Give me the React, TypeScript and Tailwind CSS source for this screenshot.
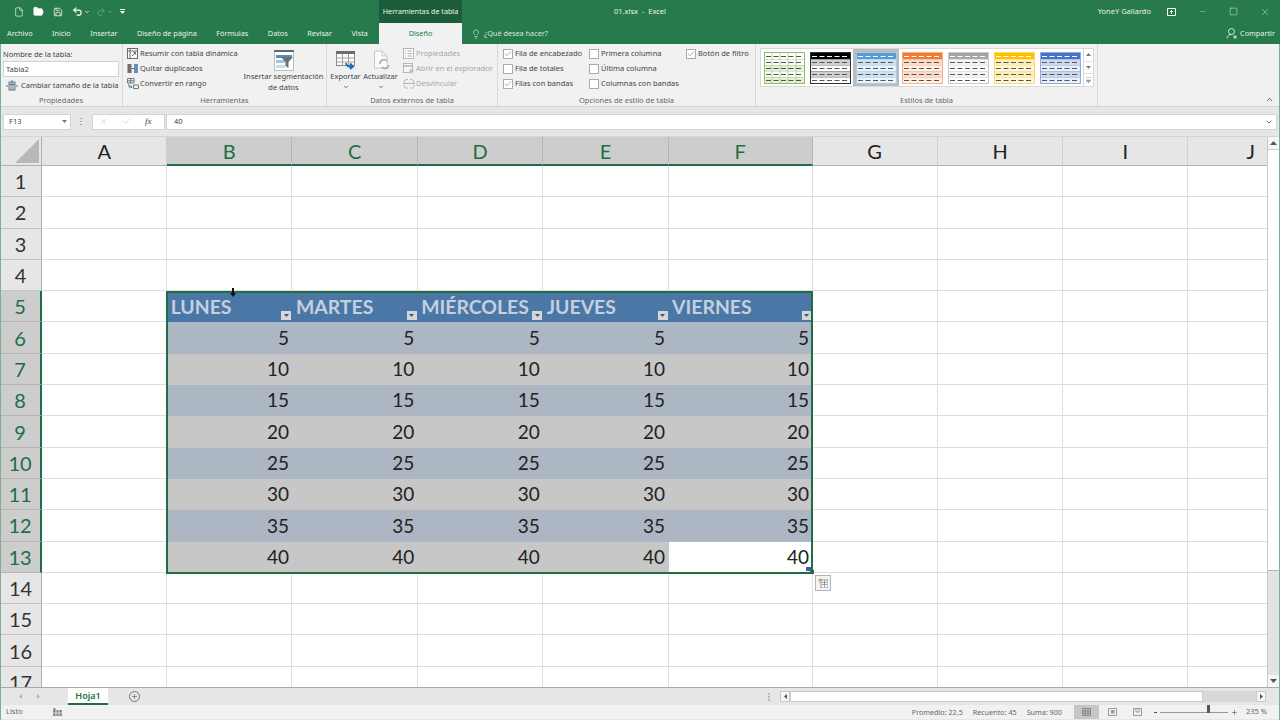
import { Check, ChevronDown, ChevronUp, File, FolderOpen, Lightbulb, Minus, Plus, Redo2, Save, Square, Undo2, X } from "lucide-react"

const ui = "font-['Noto_Sans',sans-serif]"
const sheet = "font-['Lato',sans-serif]"

const tabs = ["Archivo", "Inicio", "Insertar", "Diseño de página", "Fórmulas", "Datos", "Revisar", "Vista"]
const columns = ["A", "B", "C", "D", "E", "F", "G", "H", "I", "J"]
const heads = ["LUNES", "MARTES", "MIÉRCOLES", "JUEVES", "VIERNES"]
const rows = [1, 2, 3, 4, 5, 6, 7, 8, 9, 10, 11, 12, 13, 14, 15, 16, 17]

const styles = [
  { head: "#ffffff", band: "#ffffff", alt: "#e4f0da", edge: "#8cc063", grid: "#a9d08e", selected: false },
  { head: "#000000", band: "#cfcfcf", alt: "#ffffff", edge: "#333333", grid: "#777777", selected: false },
  { head: "#5b9bd5", band: "#cfe2f3", alt: "#eaf2fa", edge: "#a9cbe9", grid: "#a9cbe9", selected: true },
  { head: "#ed7d31", band: "#fadcc8", alt: "#fdf1e9", edge: "#f4b183", grid: "#f4b183", selected: false },
  { head: "#a5a5a5", band: "#f3f3f3", alt: "#ffffff", edge: "#c9c9c9", grid: "#d0d0d0", selected: false },
  { head: "#ffc000", band: "#ffedb8", alt: "#fff8e1", edge: "#ffd966", grid: "#ffd966", selected: false },
  { head: "#4472c4", band: "#ccd9ef", alt: "#e9eef8", edge: "#8faadc", grid: "#8faadc", selected: false },
]

function StyleThumb({ s, cols }: { s: (typeof styles)[number]; cols?: boolean }) {
  const ys = [2, 8, 14, 20, 26]
  return (
    <div className={`flex h-[37px] w-[46px] items-center justify-center ${s.selected ? "bg-[#bcbcbc]" : ""}`}>
      <svg width="41" height="32" viewBox="0 0 41 32">
        <rect x="0.5" y="0.5" width="40" height="31" fill={s.alt} stroke={s.edge} />
        {ys.map((y, i) => (
          <rect key={y} x="1" y={y - 1} width="39" height="6" fill={i === 0 ? s.head : i % 2 ? s.band : s.alt} />
        ))}
        {cols &&
          [8, 16, 24, 32].map((x) => <line key={x} x1={x} y1="1" x2={x} y2="31" stroke={s.grid} strokeWidth="0.8" />)}
        {[7.5, 13.5, 19.5, 25.5].map((y) => (
          <line key={y} x1="1" y1={y} x2="40" y2={y} stroke={s.grid} strokeWidth="0.5" />
        ))}
        {ys.map((y, i) => (
          <line
            key={y}
            x1="2"
            x2="39"
            y1={y + 2.5}
            y2={y + 2.5}
            stroke={i === 0 && !cols ? "#ffffff" : "#555555"}
            strokeWidth="1"
            strokeDasharray="5 2.5"
          />
        ))}
      </svg>
    </div>
  )
}

function Tick({ on, label, className }: { on?: boolean; label: string; className?: string }) {
  return (
    <div className={`flex h-[15px] items-center gap-[2px] ${className ?? ""}`}>
      <span className="flex h-[10px] w-[10px] items-center justify-center border border-[#ababab] bg-white">
        {on && <Check size={8} strokeWidth={1.5} className="text-[#555]" />}
      </span>
      <span className="whitespace-nowrap">{label}</span>
    </div>
  )
}

function MiniIcon({ kind, faded }: { kind: string; faded?: boolean }) {
  const c = faded ? "#b5b5b5" : "#5c7a8c"
  return (
    <svg width="12" height="11" viewBox="0 0 12 11" fill="none" className="shrink-0">
      {kind === "pivot" && (
        <>
          <rect x="0.5" y="0.5" width="10" height="10" fill="#fff" stroke="#6a6a6a" />
          <path d="M3 0.5V10.5M0.5 3H10.5" stroke="#6a6a6a" />
          <path d="M5 8L8.5 4.5M6.5 4.5H8.5V6.5" stroke="#2a7ab8" />
        </>
      )}
      {kind === "dupes" && (
        <>
          <rect x="0.5" y="1" width="4" height="9" fill="#6f6f6f" />
          <rect x="7" y="1" width="4" height="9" fill="#5d8fbf" />
          <path d="M4.5 5.5H7" stroke="#c04a2a" />
        </>
      )}
      {kind === "range" && (
        <>
          <path d="M0.5 0.5H7V5H0.5ZM0.5 2.8H7M3.5 0.5V5" stroke="#777" />
          <path d="M2 6V9H5M5 9L3.8 8M5 9L3.8 10" stroke="#2a7ab8" />
          <path d="M6.5 7H11.5V10.5H6.5Z" stroke="#777" />
        </>
      )}
      {kind === "resize" && (
        <>
          <rect x="3" y="2" width="6" height="8" stroke={c} />
          <path d="M5 2V10M7 2V10M3 4.5H9M0 6H2M10 6H12M6 0V2" stroke={c} />
        </>
      )}
      {kind === "props" && (
        <>
          <rect x="0.5" y="0.5" width="10" height="10" fill="#fff" stroke="#b5b5b5" />
          <path d="M2 3H3M2 5.5H3M2 8H3M4.5 3H9M4.5 5.5H9M4.5 8H9" stroke="#a8a8a8" />
        </>
      )}
      {kind === "open" && (
        <>
          <rect x="0.5" y="0.5" width="9" height="9" fill="#f6f6f6" stroke="#b5b5b5" />
          <path d="M0.5 3H9.5" stroke="#a8b6c2" strokeWidth="1.5" />
          <circle cx="8.5" cy="8" r="2.3" fill="#c5c5c5" />
        </>
      )}
      {kind === "unlink" && <path d="M1 5C1 2 3 1 5 1.5M11 5C11 2 9 1 7 1.5M1 7C1 10 3 10.5 5 10M11 7C11 10 9 10.5 7 10M0 5.5H12" stroke="#b5b5b5" />}
    </svg>
  )
}

function RibbonLabel({ children }: { children: string }) {
  return <div className="mt-auto mb-[0.5px] shrink-0 text-center leading-[11px] text-[#666]">{children}</div>
}

function Ribbon() {
  return (
    <div className={`${ui} relative flex h-[62px] bg-[#f1f1f1] text-[7.5px] leading-[15px] text-[#444]`}>
      <div className="flex w-[123px] flex-col border-r border-[#d8d8d8] px-[3px] pt-[3px]">
        <div className="h-[13px]">Nombre de la tabla:</div>
        <div className="mt-[1px] flex h-[16px] w-[116px] items-center border border-[#d2d2d2] bg-white pl-[2px]">Tabla2</div>
        <div className="flex h-[16px] items-center gap-[3px] pl-[3px]">
          <MiniIcon kind="resize" />
          <span className="whitespace-nowrap">Cambiar tamaño de la tabla</span>
        </div>
        <RibbonLabel>Propiedades</RibbonLabel>
      </div>

      <div className="flex w-[204px] flex-col border-r border-[#d8d8d8] pt-[2px]">
        <div className="flex min-h-0 flex-1">
          <div className="flex w-[118px] flex-col pl-[4px]">
            <div className="flex h-[15px] items-center gap-[1px]"><MiniIcon kind="pivot" /><span className="whitespace-nowrap">Resumir con tabla dinámica</span></div>
            <div className="flex h-[15px] items-center gap-[1px]"><MiniIcon kind="dupes" /><span className="whitespace-nowrap">Quitar duplicados</span></div>
            <div className="flex h-[15px] items-center gap-[1px]"><MiniIcon kind="range" /><span className="whitespace-nowrap">Convertir en rango</span></div>
          </div>
          <div className="flex w-[85px] flex-col items-center pt-[4px]">
            <svg width="20" height="21" viewBox="0 0 20 21">
              <rect x="0.5" y="0.5" width="19" height="20" fill="#fff" stroke="#bcbcbc" />
              <rect x="0" y="0" width="20" height="2" fill="#666" />
              <rect x="2" y="5" width="16" height="3" fill="#4f8fc0" />
              <rect x="2" y="10" width="9" height="3" fill="#9ec4df" />
              <rect x="2" y="15" width="9" height="3" fill="#c8dcec" />
              <path d="M7 7H19L14.5 12V18L11.5 16V12Z" fill="#6f6f6f" />
            </svg>
            <div className="whitespace-nowrap text-center leading-[11px]">Insertar segmentación<br />de datos</div>
          </div>
        </div>
        <RibbonLabel>Herramientas</RibbonLabel>
      </div>

      <div className="flex w-[171px] flex-col border-r border-[#d8d8d8] pt-[2px]">
        <div className="flex min-h-0 flex-1">
          <div className="flex w-[36px] flex-col items-center pl-[1px] pt-[4px]">
            <svg width="20" height="20" viewBox="0 0 20 20">
              <rect x="0.5" y="1.5" width="18" height="14" fill="#fff" stroke="#8a8a8a" />
              <rect x="0" y="1" width="19" height="3" fill="#6d6d6d" />
              <path d="M6.5 4V15.5M12.5 4V15.5M0.5 8H18.5M0.5 12H18.5" stroke="#a0a0a0" />
              <path d="M10 13C10 16 13 17 16 16.5M14 13.5L17 16.5L14 19" fill="none" stroke="#1f6fb4" strokeWidth="2" />
            </svg>
            <div className="mt-[1px] leading-[11px]">Exportar</div>
            <ChevronDown size={6} strokeWidth={3} className="mt-[2px]" />
          </div>
          <div className="flex w-[35px] flex-col items-center pt-[4px]">
            <svg width="20" height="20" viewBox="0 0 20 20">
              <path d="M3.5 1H11L16 6V18H3.5Z" fill="#fbfbfb" stroke="#c8c8c8" />
              <path d="M11 1V6H16" fill="none" stroke="#c8c8c8" />
              <path d="M9 14A4 4 0 0 1 16 11M18 15A4 4 0 0 1 11 17" fill="none" stroke="#a8a8a8" strokeWidth="1.6" />
            </svg>
            <div className="mt-[1px] leading-[11px]">Actualizar</div>
            <ChevronDown size={6} strokeWidth={3} className="mt-[2px]" />
          </div>
          <div className="flex flex-col pl-[5px] text-[#a6a6a6]">
            <div className="flex h-[15px] items-center gap-[1px]"><MiniIcon kind="props" faded /><span className="whitespace-nowrap">Propiedades</span></div>
            <div className="flex h-[15px] items-center gap-[1px]"><MiniIcon kind="open" faded /><span className="whitespace-nowrap">Abrir en el explorador</span></div>
            <div className="flex h-[15px] items-center gap-[1px]"><MiniIcon kind="unlink" faded /><span className="whitespace-nowrap">Desvincular</span></div>
          </div>
        </div>
        <RibbonLabel>Datos externos de tabla</RibbonLabel>
      </div>

      <div className="flex w-[258px] flex-col border-r border-[#d8d8d8] pt-[2px]">
        <div className="flex min-h-0 flex-1 pl-[5px]">
          <div className="flex w-[86px] flex-col">
            <Tick on label="Fila de encabezado" />
            <Tick label="Fila de totales" />
            <Tick on label="Filas con bandas" />
          </div>
          <div className="flex w-[97px] flex-col">
            <Tick label="Primera columna" />
            <Tick label="Última columna" />
            <Tick label="Columnas con bandas" />
          </div>
          <div className="flex flex-col">
            <Tick on label="Botón de filtro" />
          </div>
        </div>
        <RibbonLabel>Opciones de estilo de tabla</RibbonLabel>
      </div>

      <div className="flex w-[342px] flex-col border-r border-[#d8d8d8] pt-[4px]">
        <div className="ml-[4px] flex h-[39px] w-[334px] border border-[#d8d8d8] bg-white">
          {styles.map((s, i) => (
            <StyleThumb key={s.head + i} s={s} cols={i === 0} />
          ))}
          <div className="ml-auto flex w-[10px] flex-col border-l border-[#d8d8d8] text-[#777]">
            <div className="flex flex-1 items-center justify-center border-b border-[#e2e2e2]"><svg width="5" height="3"><path d="M2.5 0L5 3H0Z" fill="#777" /></svg></div>
            <div className="flex flex-1 items-center justify-center border-b border-[#e2e2e2]"><svg width="5" height="3"><path d="M2.5 3L5 0H0Z" fill="#777" /></svg></div>
            <div className="flex flex-1 items-center justify-center"><svg width="5" height="6"><path d="M0 0.5H5M2.5 6L5 3H0Z" stroke="#999" strokeWidth="0.5" fill="#999" /></svg></div>
          </div>
        </div>
        <RibbonLabel>Estilos de tabla</RibbonLabel>
      </div>
      <ChevronUp size={9} strokeWidth={2.5} className="absolute bottom-[2px] right-[6px] text-[#555]" />
    </div>
  )
}

function FormulaBar() {
  return (
    <div className={`${ui} flex h-[30px] items-center border-t border-[#d4d4d4] bg-[#e6e6e6] px-[3px] text-[7.5px] text-[#444]`}>
      <div className="flex h-[16px] w-[68px] items-center justify-between border border-[#d4d4d4] bg-white pl-[5px] pr-[3px]">
        <span>F13</span>
        <svg width="5" height="3"><path d="M0 0H5L2.5 3Z" fill="#777" /></svg>
      </div>
      <div className="mx-[9px] flex w-[3px] flex-col gap-[2px]">
        <span className="h-[1px] w-[2px] bg-[#aaa]" />
        <span className="h-[1px] w-[2px] bg-[#aaa]" />
        <span className="h-[1px] w-[2px] bg-[#aaa]" />
      </div>
      <div className="flex h-[16px] w-[73px] items-center gap-[14px] border border-[#d4d4d4] bg-white pl-[6px]">
        <X size={9} className="text-[#aaa]" strokeWidth={1.2} />
        <Check size={9} className="text-[#aaa]" strokeWidth={1.2} />
        <span className="font-['Liberation_Serif',serif] text-[9px] italic text-[#444]">fx</span>
      </div>
      <div className="ml-[1px] flex h-[16px] flex-1 items-center justify-between border border-[#d4d4d4] bg-white pl-[7px] pr-[3px]">
        <span>40</span>
        <ChevronDown size={8} strokeWidth={2.5} className="text-[#555]" />
      </div>
    </div>
  )
}

function Cell({ col, row }: { col: number; row: number }) {
  const inTable = col >= 1 && col <= 5 && row >= 5 && row <= 13
  if (!inTable) {
    return <div className="border-b border-r border-[#dedede] bg-white" />
  }
  if (row === 5) {
    return (
      <div className="relative flex items-center overflow-hidden bg-[#4a77a6] pl-[3.5px] text-[19.4px] font-bold text-[#c5d0de]">
        <span className="whitespace-nowrap">{heads[col - 1]}</span>
        <span className="absolute bottom-[2px] right-[1px] flex h-[9px] w-[10px] items-center justify-center bg-[#d3d6da]">
          <svg width="5" height="3"><path d="M0 0H5L2.5 3Z" fill="#555" /></svg>
        </span>
      </div>
    )
  }
  const active = row === 13 && col === 5
  const band = row % 2 === 0 ? "bg-[#adb6c3]" : "bg-[#c7c7c7]"
  return (
    <div className={`flex items-center justify-end pr-[3.5px] text-[19px] text-[#222] ${active ? "bg-white" : band}`}>
      {(row - 5) * 5}
    </div>
  )
}

function Grid() {
  return (
    <div className={`${sheet} relative grid min-w-0 flex-1 grid-cols-[42.2px_125px_125.3px_125.3px_125.5px_125.3px_144px_125.2px_125.5px_125.2px_125.3px] grid-rows-[29px] auto-rows-[31.3px] overflow-hidden`}>
      <div className="flex items-end justify-end border-b border-r border-[#b0b0b0] bg-[#e6e6e6] pb-[2px] pr-[2px]">
        <svg width="24" height="24"><path d="M24 0V24H0Z" fill="#b8b8b8" /></svg>
      </div>
      {columns.map((c, i) => {
        const sel = i >= 1 && i <= 5
        return (
          <div
            key={c}
            className={`flex items-center justify-center border-r text-[20px] ${
              sel ? "border-b-2 border-r-[#b5b5b5] border-b-[#1e6e42] bg-[#cdcdcd] text-[#1e6e42]" : "border-b border-r-[#cfcfcf] border-b-[#b0b0b0] bg-[#e6e6e6] text-[#222]"
            }`}
          >
            {c}
          </div>
        )
      })}
      {rows.map((r) => {
        const sel = r >= 5 && r <= 13
        return [
          <div
            key={`h${r}`}
            className={`flex items-center justify-center border-b text-[20px] ${
              sel ? "border-r-2 border-r-[#1e6e42] border-b-[#b5b5b5] bg-[#cdcdcd] text-[#1e6e42]" : "border-r border-r-[#b0b0b0] border-b-[#c4c4c4] bg-[#e6e6e6] text-[#333]"
            }`}
          >
            {r}
          </div>,
          ...columns.map((_, i) => <Cell key={`${r}-${i}`} col={i} row={r} />),
        ]
      })}

      {/* selection, fill handle, paste options */}
      <div className="pointer-events-none absolute left-[166px] top-[154px] h-[283px] w-[647px] border-2 border-[#1e6e42]" />
      <div className="absolute left-[806px] top-[430px] h-[4px] w-[5px] bg-[#4a55a8]" />
      <div className="absolute left-[810px] top-[433px] h-[4px] w-[4px] bg-[#1e6e42]" />
      <div className="absolute left-[815px] top-[438px] flex h-[16px] w-[16px] items-center justify-center border border-[#b5b5b5] bg-[#f4f4f4]">
        <svg width="10" height="10" viewBox="0 0 10 10">
          <rect x="3" y="2" width="7" height="8" fill="#fff" stroke="#777" strokeWidth="0.8" />
          <path d="M4 4.5H9M4 6.5H9M6.5 2.5V9.5" stroke="#6a7f95" strokeWidth="0.7" />
          <path d="M0 1L4 0.5L2 5Z" fill="#d9a25f" />
        </svg>
      </div>
      <svg width="6" height="9" viewBox="0 0 6 9" className="absolute left-[230px] top-[151px]">
        <path d="M2 0H4V5H6L3 9L0 5H2Z" fill="#111" />
      </svg>
    </div>
  )
}

function VScroll() {
  return (
    <div className="flex w-[13px] shrink-0 flex-col border-l border-[#c9c9c9] bg-[#e3e3e3] pr-[1px]">
      <div className="flex h-[13px] items-center justify-center border-b border-[#cfcfcf] bg-[#f5f5f5]"><svg width="7" height="4"><path d="M3.5 0L7 4H0Z" fill="#555" /></svg></div>
      <div className="h-[421px] border-b border-[#b5b5b5] bg-white" />
      <div className="flex-1" />
      <div className="flex h-[12px] items-center justify-center bg-[#f5f5f5]"><svg width="7" height="4"><path d="M3.5 4L7 0H0Z" fill="#555" /></svg></div>
    </div>
  )
}

function SheetTabs() {
  return (
    <div className={`${ui} flex h-[18px] items-center border-t border-[#a9a9a9] bg-[#e6e6e6] text-[9px]`}>
      <div className="flex w-[68px] items-center gap-[15px] pl-[19px] text-[#aaa]">
        <svg width="3" height="5"><path d="M3 0V5L0 2.5Z" fill="#b5b5b5" /></svg>
        <svg width="3" height="5"><path d="M0 0V5L3 2.5Z" fill="#b5b5b5" /></svg>
      </div>
      <div className="flex h-[17px] w-[40px] items-center justify-center border-b-2 border-[#1e6e42] bg-white font-semibold text-[#1e6e42]">Hoja1</div>
      <div className="ml-[21px] flex h-[11px] w-[11px] items-center justify-center rounded-full border border-[#777]">
        <Plus size={7} strokeWidth={2} className="text-[#555]" />
      </div>
      <div className="ml-[628px] flex w-[6px] flex-col gap-[1px]">
        <span className="h-[2px] w-[2px] bg-[#bbb]" />
        <span className="h-[2px] w-[2px] bg-[#bbb]" />
        <span className="h-[2px] w-[2px] bg-[#bbb]" />
      </div>
      <div className="ml-[6px] flex h-[11px] w-[10px] items-center justify-center border border-[#c9c9c9] bg-[#f5f5f5]"><svg width="3" height="5"><path d="M3 0V5L0 2.5Z" fill="#555" /></svg></div>
      <div className="h-[11px] w-[413px] border border-[#c9c9c9] bg-white" />
      <div className="h-[11px] w-[53px] bg-[#d8d8d8]" />
      <div className="flex h-[11px] w-[10px] items-center justify-center border border-[#c9c9c9] bg-[#f5f5f5]"><svg width="3" height="5"><path d="M0 0V5L3 2.5Z" fill="#555" /></svg></div>
    </div>
  )
}

function StatusBar() {
  return (
    <div className={`${ui} flex h-[14px] items-center bg-[#f1f1f1] pl-[6px] pr-[13px] text-[7.5px] text-[#666]`}>
      <span>Listo</span>
      <svg width="9" height="8" viewBox="0 0 9 8" className="ml-[30px]">
        <rect x="0" y="2" width="9" height="6" fill="#8a8a8a" />
        <path d="M3 2V8M6 2V8M0 5H9" stroke="#f1f1f1" strokeWidth="0.7" />
        <circle cx="1.5" cy="1" r="1" fill="#666" />
      </svg>
      <div className="ml-auto flex gap-[10px] whitespace-nowrap text-[7.2px]">
        <span>Promedio: 22,5</span>
        <span>Recuento: 45</span>
        <span>Suma: 900</span>
      </div>
      <div className="ml-[12px] flex h-[14px] w-[25px] shrink-0 items-center justify-center bg-[#c6c6c6]">
        <svg width="9" height="8" viewBox="0 0 9 8"><path d="M0.5 0.5H8.5V7.5H0.5ZM0.5 3H8.5M0.5 5.2H8.5M3 0.5V7.5M6 0.5V7.5" fill="none" stroke="#666" strokeWidth="0.6" /></svg>
      </div>
      <div className="ml-[9px] flex shrink-0 gap-[16px]">
        <svg width="9" height="8" viewBox="0 0 9 8"><path d="M0.5 0.5H8.5V7.5H0.5Z" fill="none" stroke="#777" strokeWidth="0.7" /><rect x="3" y="2" width="3.5" height="3.5" fill="#999" /></svg>
        <svg width="9" height="8" viewBox="0 0 9 8"><path d="M0.5 0.5H8.5V7.5H0.5ZM3 0.5V4H6V0.5" fill="none" stroke="#777" strokeWidth="0.7" /></svg>
      </div>
      <div className="relative ml-[12px] flex w-[85px] shrink-0 items-center">
        <span className="h-[1px] w-[3px] bg-[#555]" />
        <span className="ml-[3px] h-[1px] w-[68px] bg-[#999]" />
        <Plus size={7} strokeWidth={2} className="ml-[3px] text-[#555]" />
        <span className="absolute left-[53px] top-[-4px] h-[8px] w-[3px] bg-[#555]" />
      </div>
      <span className="ml-[7px] whitespace-nowrap">235 %</span>
    </div>
  )
}

export default function App() {
  return (
    <div className="relative flex h-[720px] w-[1280px] flex-col overflow-hidden bg-[#e6e6e6]">
      {/* title bar */}
      <div className={`${ui} flex h-[23px] items-center bg-[#267a4c] text-[7.5px] text-[#edf4ef]`}>
        <div className="flex w-[379px] items-center pl-[14px]">
          <File size={10} strokeWidth={1.5} className="text-white" />
          <FolderOpen size={11} strokeWidth={1.8} className="ml-[9px] text-white" fill="#ffffff" />
          <Save size={10} strokeWidth={1.8} className="ml-[9px] text-white" />
          <Undo2 size={11} strokeWidth={2.4} className="ml-[9px] text-white" />
          <ChevronDown size={6} strokeWidth={3} className="ml-[1px] text-white" />
          <Redo2 size={10} strokeWidth={2} className="ml-[6px] text-[#6aa585]" />
          <ChevronDown size={6} strokeWidth={3} className="ml-[1px] text-[#6aa585]" />
          <svg width="5" height="5" viewBox="0 0 5 5" className="ml-[7px]">
            <path d="M0 0.5H5" stroke="#fff" />
            <path d="M0 2H5L2.5 5Z" fill="#fff" />
          </svg>
        </div>
        <div className="flex h-[23px] w-[83px] items-center justify-center whitespace-nowrap bg-[#1c5c39] text-[7.2px]">Herramientas de tabla</div>
        <span className="ml-[152px] whitespace-pre">01.xlsx  -  Excel</span>
        <div className="ml-auto flex items-center">
          <span className="mr-[5px] whitespace-nowrap">YoneY Gallardo</span>
          <div className="flex w-[31px] justify-center">
            <svg width="9" height="8" viewBox="0 0 9 8">
              <path d="M0.5 0.5H8.5V7.5H0.5Z" fill="none" stroke="#fff" />
              <path d="M4.5 6V2.5M3 4L4.5 2.5L6 4" fill="none" stroke="#fff" />
            </svg>
          </div>
          <div className="flex w-[31px] justify-center"><Minus size={9} strokeWidth={1} className="text-[#cfe2d7]" /></div>
          <div className="flex w-[31px] justify-center"><Square size={9} strokeWidth={1.2} className="text-white" /></div>
          <div className="flex w-[31px] justify-center"><X size={10} strokeWidth={1} className="text-white" /></div>
        </div>
      </div>

      {/* tabs */}
      <div className={`${ui} flex h-[21px] items-center bg-[#267a4c] text-[7.3px] text-[#e9f2ec]`}>
        <div className="flex w-[379px] gap-[19.5px] pl-[7px]">
          {tabs.map((t) => (
            <span key={t} className="whitespace-nowrap">{t}</span>
          ))}
        </div>
        <div className="flex h-[21px] w-[83px] items-center justify-center bg-[#f1f1f1] text-[#267a4c]">Diseño</div>
        <Lightbulb size={10} strokeWidth={1.3} className="ml-[9px] text-white" />
        <span className="ml-[3px] whitespace-nowrap text-[#d7e7dd]">¿Qué desea hacer?</span>
        <div className="ml-auto flex items-center gap-[3px] pr-[5px]">
          <svg width="11" height="11" viewBox="0 0 11 11" fill="none" stroke="#fff" strokeWidth="0.8">
            <circle cx="5.5" cy="3.5" r="3" />
            <path d="M1 10.5C1.5 7.5 3.5 6.5 5.5 6.5M7 9H11M9 7V11" />
          </svg>
          <span>Compartir</span>
        </div>
      </div>

      <Ribbon />
      <FormulaBar />

      <div className="flex h-[551px] w-full overflow-hidden border-t border-[#d4d4d4]">
        <Grid />
        <VScroll />
      </div>
      <SheetTabs />
      <StatusBar />

      {/* window edge */}
      <div className="absolute bottom-0 left-0 top-[44px] w-[1px] bg-[#7fae93]" />
      <div className="absolute bottom-0 right-0 top-[44px] w-[1px] bg-[#7fae93]" />
    </div>
  )
}
